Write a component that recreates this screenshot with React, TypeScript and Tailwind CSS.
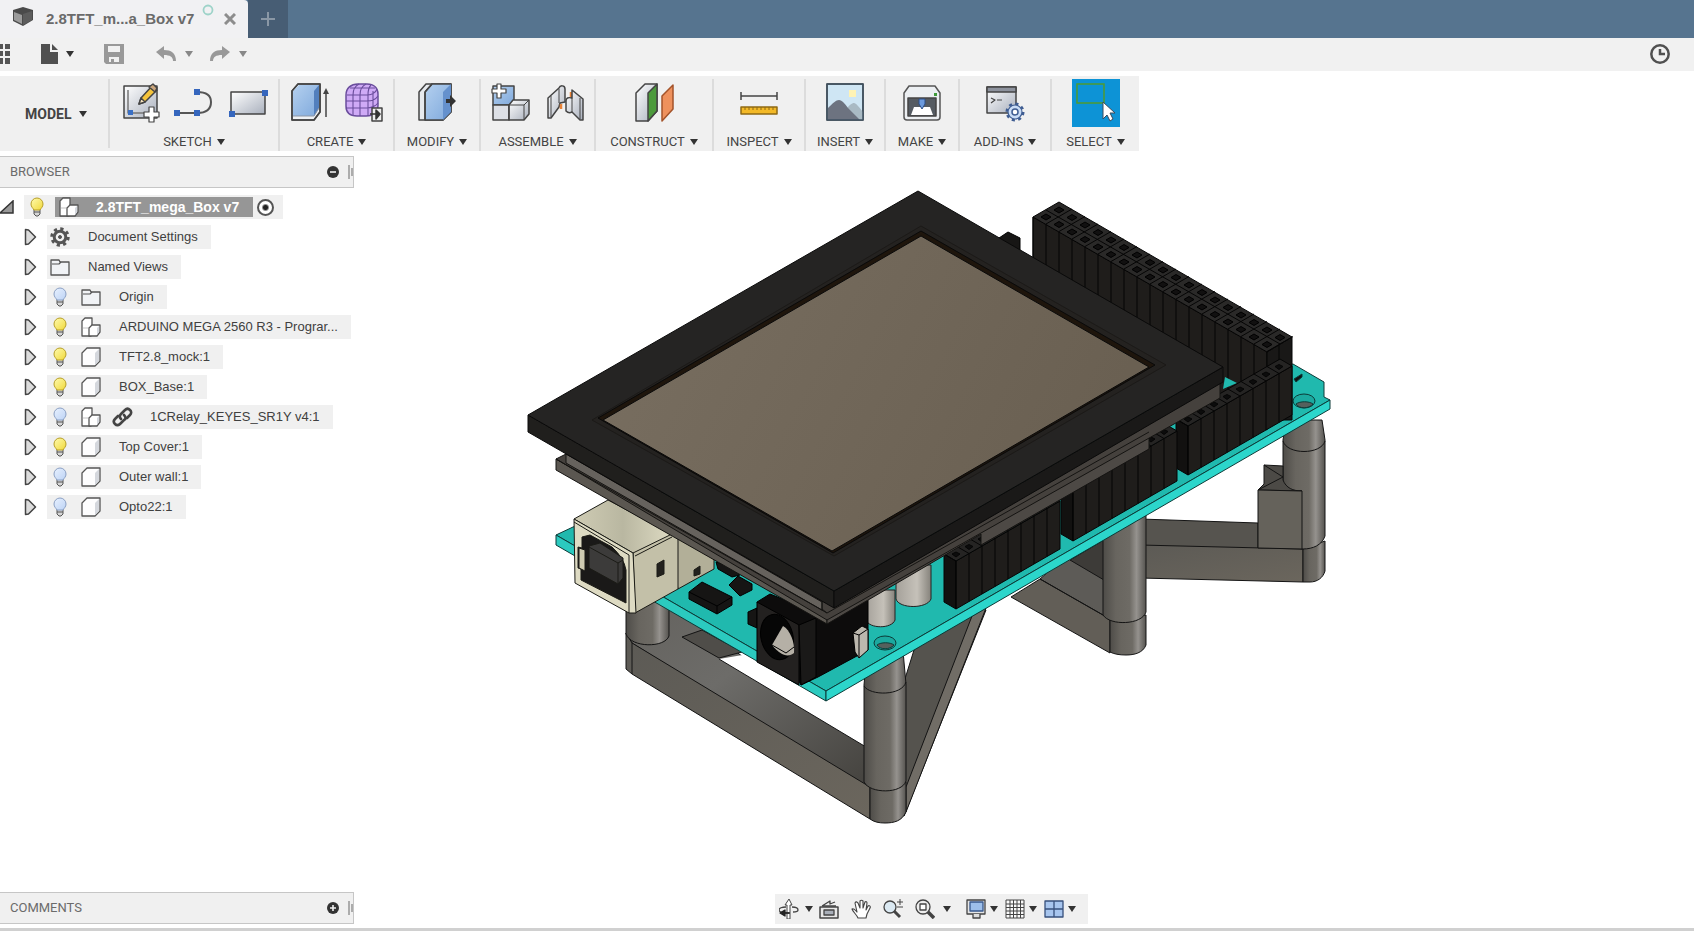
import type { ReactNode } from "react";

type TreeItem = {
  name: string;
  icon: "gear" | "folder" | "body" | "assembly";
  bulb?: "on" | "off";
  linked?: boolean;
};

const treeItems: TreeItem[] = [
  { name: "Document Settings", icon: "gear" },
  { name: "Named Views", icon: "folder" },
  { name: "Origin", icon: "folder", bulb: "off" },
  { name: "ARDUINO MEGA 2560 R3 - Prograr...", icon: "assembly", bulb: "on" },
  { name: "TFT2.8_mock:1", icon: "body", bulb: "on" },
  { name: "BOX_Base:1", icon: "body", bulb: "on" },
  { name: "1CRelay_KEYES_SR1Y v4:1", icon: "assembly", bulb: "off", linked: true },
  { name: "Top Cover:1", icon: "body", bulb: "on" },
  { name: "Outer wall:1", icon: "body", bulb: "off" },
  { name: "Opto22:1", icon: "body", bulb: "off" },
];

function Caret({ className = "text-[#333]" }: { className?: string }) {
  return (
    <svg width="8" height="6" viewBox="0 0 8 6" className={`shrink-0 ${className}`}>
      <path d="M0 0h8L4 6z" fill="currentColor" />
    </svg>
  );
}

function Gradients() {
  return (
    <svg width="0" height="0" className="absolute">
      <defs>
        <linearGradient id="silver" x1="0" y1="0" x2="1" y2="1">
          <stop offset="0" stopColor="#ffffff" />
          <stop offset="1" stopColor="#a9b0bd" />
        </linearGradient>
        <linearGradient id="blue" x1="0" y1="0" x2="1" y2="1">
          <stop offset="0" stopColor="#b4d0ef" />
          <stop offset="1" stopColor="#7fa9dc" />
        </linearGradient>
        <linearGradient id="bulbOn" x1="0" y1="0" x2="1" y2="1">
          <stop offset="0" stopColor="#fffbb0" />
          <stop offset="1" stopColor="#f0d83a" />
        </linearGradient>
        <linearGradient id="bulbOff" x1="0" y1="0" x2="1" y2="1">
          <stop offset="0" stopColor="#e8f1ff" />
          <stop offset="1" stopColor="#bdd3f5" />
        </linearGradient>
        <linearGradient id="post" x1="0" y1="0" x2="1" y2="0">
          <stop offset="0" stopColor="#4e4c48" />
          <stop offset="0.3" stopColor="#68655f" />
          <stop offset="0.62" stopColor="#6e6b65" />
          <stop offset="0.78" stopColor="#95928e" />
          <stop offset="1" stopColor="#55534f" />
        </linearGradient>
        <linearGradient id="screen" x1="0" y1="0" x2="1" y2="0.3">
          <stop offset="0" stopColor="#796f61" />
          <stop offset="1" stopColor="#6a6052" />
        </linearGradient>
        <linearGradient id="arm" x1="0" y1="0" x2="1" y2="1">
          <stop offset="0" stopColor="#5c5a55" />
          <stop offset="1" stopColor="#6b665d" />
        </linearGradient>
        <linearGradient id="armTop" x1="0" y1="0" x2="1" y2="1">
          <stop offset="0" stopColor="#64625e" />
          <stop offset="0.4" stopColor="#6d6c69" />
          <stop offset="1" stopColor="#44423e" />
        </linearGradient>
        <linearGradient id="cap" x1="0" y1="0" x2="1" y2="0">
          <stop offset="0" stopColor="#a5a19a" />
          <stop offset="0.6" stopColor="#c5c1b9" />
          <stop offset="1" stopColor="#85827b" />
        </linearGradient>
        <linearGradient id="usbTop" x1="0" y1="0" x2="1" y2="0">
          <stop offset="0" stopColor="#cfccb4" />
          <stop offset="0.5" stopColor="#b9b7a1" />
          <stop offset="1" stopColor="#dddac2" />
        </linearGradient>
      </defs>
    </svg>
  );
}

/* ---------- ribbon icons ---------- */

function RibbonIcon({ width = 40, children }: { width?: number; children: ReactNode }) {
  return (
    <svg width={width} height="40" viewBox={`0 0 ${width} 40`} fill="none" stroke="#444" strokeWidth="1.5" strokeLinejoin="round">
      {children}
    </svg>
  );
}

function SketchIcon() {
  return (
    <RibbonIcon>
      <path d="M4 3h33v32H4z" fill="url(#silver)" />
      <path d="M8 7v23h22" stroke="#777" />
      <path d="M8 27h5v5H8z" fill="#3a6fc4" stroke="none" />
      <path d="M19 21l2-6L32 3l5 4-12 12z" fill="#f5c43c" />
      <path d="M19 21l2-6 4 4z" fill="#f7e3bd" />
      <path d="M29 4l4-3 4 4-2 4z" fill="#c9a57c" />
      <path d="M29 24h5v5h5v5h-5v5h-5v-5h-5v-5h5z" fill="#fff" strokeWidth="1.2" />
    </RibbonIcon>
  );
}

function LineIcon() {
  return (
    <RibbonIcon>
      <path d="M3 30h20c9 0 14-4 14-11S31 9 23 9" strokeWidth="2" stroke="#555" />
      <g fill="#3566bd" stroke="none">
        <path d="M0 27h6v6H0zM20 27h6v6h-6zM20 6h6v6h-6z" />
      </g>
    </RibbonIcon>
  );
}

function RectIcon() {
  return (
    <RibbonIcon>
      <path d="M3 9h34v22H3z" fill="url(#silver)" />
      <path d="M34 7h6v6h-6zM1 28h6v6H1z" fill="#3566bd" stroke="none" />
    </RibbonIcon>
  );
}

function ExtrudeIcon() {
  return (
    <RibbonIcon>
      <path d="M2 8l6-7h22v28l-6 8H2z" fill="#eef1f5" />
      <path d="M3 8l6-6h20v23l-5 8H3z" fill="url(#blue)" stroke="none" />
      <path d="M24 8l5-6v23l-5 8z" fill="#527fbd" stroke="none" />
      <path d="M3 33h21l5-8" stroke="#8d97a6" strokeWidth="1" />
      <path d="M2 8l6-7h22v28l-6 8H2z" />
      <path d="M36 34V9" />
      <path d="M36 5l3 6h-6z" fill="#444" stroke="none" />
    </RibbonIcon>
  );
}

function FormIcon() {
  return (
    <RibbonIcon>
      <path d="M2 12c0-7 5-11 12-11h9c7 0 11 4 11 10v11c0 7-4 11-12 11h-9C6 33 2 30 2 23z" fill="#cfaaf6" stroke="#6a4d9c" />
      <path d="M3 12h21c4 0 8-3 9-6M2 18h21c5 0 9-2 11-5M2 25h21c4 0 9-2 11-5M9 32V12c0-6 2-9 6-11M16 33V12c0-6 2-9 6-11M24 33V12c0-5 1-8 3-10M29 30V8M6 5h25" stroke="#6a4d9c" strokeWidth="1.1" />
      <path d="M28 25h10v13H28z" fill="#eee" />
      <path d="M26 31h7M32 27l4 4-4 5z" fill="#333" stroke="#333" />
    </RibbonIcon>
  );
}

function PressPullIcon() {
  return (
    <RibbonIcon>
      <path d="M2 9l7-8h25v28l-8 8H2z" fill="#e7eaee" />
      <path d="M8 9l7-8h19v28l-8 8H8z" fill="url(#blue)" />
      <path d="M26 9l8-8v28l-8 8z" fill="#6591cd" stroke="none" />
      <path d="M8 9l7-8M8 9v28" />
      <path d="M29 16h4v-4l6 6-6 6v-4h-4z" fill="#333" stroke="none" />
    </RibbonIcon>
  );
}

function ComponentIcon() {
  return (
    <RibbonIcon>
      <path d="M2 3h21v19H2z" fill="url(#blue)" />
      <path d="M2 22h16v15H2z" fill="#dde0e6" />
      <path d="M18 22l4-5h16v14l-5 6H18z" fill="url(#silver)" />
      <path d="M18 22h15v15M33 22l5-5M18 22v15" strokeWidth="1" />
      <path d="M6 1h4v5h5v4h-5v5H6v-5H1V6h5z" fill="#fff" strokeWidth="1.2" />
    </RibbonIcon>
  );
}

function JointIcon() {
  return (
    <RibbonIcon>
      <path d="M3 15L14 5c1-3 6-3 6 1v13l-5 1-1 4-8 11H3z" fill="url(#silver)" />
      <path d="M6 13v21M14 6v14" strokeWidth="1" />
      <path d="M16 21v5M26 9v5" stroke="#e98338" strokeWidth="2.5" />
      <path d="M38 16L27 7v8c-4-1-6 0-6 3v10c2 2 4 2 6 1l8 8h3z" fill="url(#silver)" />
      <path d="M27 15v14M35 15v21" strokeWidth="1" />
    </RibbonIcon>
  );
}

function PlaneIcon() {
  return (
    <RibbonIcon>
      <path d="M2 10l9-9h12v27l-9 10H2z" fill="url(#silver)" />
      <path d="M14 10l9-9v27l-9 10z" fill="#4c9a3c" />
      <path d="M28 13l11-11v24L28 38z" fill="#ee915d" stroke="#a4532a" />
    </RibbonIcon>
  );
}

function MeasureIcon() {
  return (
    <RibbonIcon>
      <path d="M2 13h36M2 9v8M38 9v8" />
      <path d="M2 24h36v7H2z" fill="#f3b927" stroke="#8f6a14" />
      <path d="M6 24v3M10 24v3M14 24v3M18 24v3M22 24v3M26 24v3M30 24v3M34 24v3" stroke="#8f6a14" strokeWidth="1" />
    </RibbonIcon>
  );
}

function ImageIcon() {
  return (
    <RibbonIcon>
      <path d="M2 1h36v36H2z" fill="#cfe6f4" />
      <path d="M24 7h7v7h-7z" fill="#fff3b5" stroke="none" />
      <path d="M20 28c4-6 7-8 9-8s5 4 9 9v8H20z" fill="#a9bac4" stroke="none" />
      <path d="M3 25c5-5 8-8 11-8s6 4 9 8l12 12H3z" fill="#6d7380" stroke="none" />
      <path d="M2 1h36v36H2z" stroke="#3f5261" />
    </RibbonIcon>
  );
}

function PrintIcon() {
  return (
    <RibbonIcon>
      <path d="M2 10l5-7h26l5 7v24c0 2-1 3-3 3H5c-2 0-3-1-3-3z" fill="#eceff2" stroke="#555" />
      <path d="M6 15h28v18H6z" fill="#555b62" />
      <path d="M12 24h16l3 8H9z" fill="#fff" stroke="none" />
      <path d="M17 16h6v5l-3 5-3-5z" fill="#6c9add" stroke="#2d4f87" strokeWidth="1" />
      <path d="M32 10h3v3h-3z" fill="#3f9b3a" stroke="none" />
    </RibbonIcon>
  );
}

function ScriptIcon() {
  return (
    <RibbonIcon>
      <path d="M2 4h29v26H2z" fill="url(#silver)" />
      <path d="M2 4h29v5H2z" fill="#8d929d" />
      <path d="M6 15l4 2-4 3M12 17h5" strokeWidth="1.2" />
      <circle cx="30" cy="29" r="8" stroke="#3f5d92" strokeWidth="3" strokeDasharray="3 3.3" />
      <circle cx="30" cy="29" r="7" fill="#c9dcf6" stroke="#3f5d92" strokeWidth="1.2" />
      <circle cx="30" cy="29" r="3" fill="#fff" stroke="#3f5d92" />
    </RibbonIcon>
  );
}

function SelectIcon() {
  return (
    <svg width="48" height="48" viewBox="0 0 48 48" fill="none" className="bg-[#0d93d6]">
      <path d="M5 5h27v19H5z" stroke="#4f9b31" strokeWidth="1.5" />
      <path d="M31 23v17l4-4 3 6 3-2-3-6h5z" fill="#fff" stroke="#3b4a5c" strokeLinejoin="round" />
    </svg>
  );
}

const ribbonGroups = [
  { label: "SKETCH", width: "w-[170px]", icons: [SketchIcon, LineIcon, RectIcon] },
  { label: "CREATE", width: "w-[115px]", icons: [ExtrudeIcon, FormIcon] },
  { label: "MODIFY", width: "w-[86px]", icons: [PressPullIcon] },
  { label: "ASSEMBLE", width: "w-[115px]", icons: [ComponentIcon, JointIcon] },
  { label: "CONSTRUCT", width: "w-[118px]", icons: [PlaneIcon] },
  { label: "INSPECT", width: "w-[92px]", icons: [MeasureIcon] },
  { label: "INSERT", width: "w-[80px]", icons: [ImageIcon] },
  { label: "MAKE", width: "w-[74px]", icons: [PrintIcon] },
  { label: "ADD-INS", width: "w-[92px]", icons: [ScriptIcon] },
  { label: "SELECT", width: "w-[87px]", icons: [SelectIcon] },
];

/* ---------- tree icons ---------- */

function Bulb({ on }: { on: boolean }) {
  return (
    <svg width="14" height="20" viewBox="0 0 14 20" className="shrink-0">
      <path d="M4 12h6v5l-2 2H6l-2-2z" fill="#d6d6d6" stroke="#555" />
      <path d="M4 15h6" stroke="#555" />
      <path d="M7 1a6 6 0 0 0-6 6c0 3 2 4 3 6h6c1-2 3-3 3-6a6 6 0 0 0-6-6z" fill={on ? "url(#bulbOn)" : "url(#bulbOff)"} stroke={on ? "#b89f27" : "#8ba0c4"} />
    </svg>
  );
}

function NodeIcon({ icon }: { icon: TreeItem["icon"] }) {
  if (icon === "gear") {
    return (
      <svg width="20" height="20" viewBox="0 0 20 20" className="shrink-0" fill="none" stroke="#555">
        <circle cx="10" cy="10" r="5.8" strokeWidth="3" />
        <circle cx="10" cy="10" r="8.2" strokeWidth="3" strokeDasharray="3.2 3.24" />
        <circle cx="10" cy="10" r="1.5" fill="#555" />
      </svg>
    );
  }
  if (icon === "folder") {
    return (
      <svg width="20" height="20" viewBox="0 0 20 20" className="shrink-0" stroke="#555" strokeLinejoin="round">
        <path d="M1 3h8l1 2h9v13H1z" fill="#f1f3f6" strokeWidth="1.3" />
        <path d="M2 7h7l2-2" fill="none" strokeWidth="1.2" />
      </svg>
    );
  }
  if (icon === "body") {
    return (
      <svg width="20" height="20" viewBox="0 0 20 20" className="shrink-0" stroke="#555" strokeLinejoin="round">
        <path d="M1 6l5-5h13v13l-5 5H1z" fill="#fdfdfe" strokeWidth="1.3" />
        <path d="M14 6l4-4v12l-4 4z" fill="#d4d7dd" stroke="none" />
      </svg>
    );
  }
  return (
    <svg width="20" height="20" viewBox="0 0 20 20" className="shrink-0" stroke="#555" strokeLinejoin="round" strokeWidth="1.3">
      <path d="M1 4l3-3h7v7l-1 11H1z" fill="#fff" />
      <path d="M8 11l3-3h8v7l-3 4H8z" fill="#fff" />
      <path d="M16 11l2-2v6l-2 3z" fill="#d4d7dd" stroke="none" />
      <path d="M1 11h7" strokeWidth="0.6" stroke="#999" />
    </svg>
  );
}

function LinkIcon() {
  return (
    <svg width="22" height="20" viewBox="0 0 22 20" className="shrink-0" fill="none" stroke="#444" strokeWidth="2.6" strokeLinecap="round">
      <path d="M9 12c-2-2-1-4 0-5l4-4c2-2 4-1 5 0s2 3 0 5l-3 3" />
      <path d="M12 8c2 2 2 4 0 5l-4 4c-1 1-3 2-5 0s-1-4 0-5l3-3" />
    </svg>
  );
}

function ExpandArrow() {
  return (
    <button aria-label="Expand" className="mr-[10px] h-5 w-[13px] shrink-0">
      <svg width="13" height="18" viewBox="0 0 13 18">
        <path d="M1.5 1.5l3 .5 7 7-7 7-3 .5z" fill="#dcdcdc" stroke="#444" strokeWidth="1.5" strokeLinejoin="round" />
      </svg>
    </button>
  );
}

function TreeRow({ item }: { item: TreeItem }) {
  return (
    <li className="flex items-center pl-6">
      <ExpandArrow />
      <div className="flex h-6 items-center bg-[#f0f0f0] pr-[13px]">
        {item.bulb && (
          <button aria-label="Toggle visibility" className="ml-[6px] mr-[14px] w-[14px]">
            <Bulb on={item.bulb === "on"} />
          </button>
        )}
        <span className={item.bulb ? "mr-[18px]" : "ml-[3px] mr-[18px]"}>
          <NodeIcon icon={item.icon} />
        </span>
        {item.linked && (
          <span className="-ml-[7px] mr-4">
            <LinkIcon />
          </span>
        )}
        <span className="whitespace-nowrap text-[13px] text-[#404040]">{item.name}</span>
      </div>
    </li>
  );
}

function PanelHeader({ title, sign }: { title: string; sign: "minus" | "plus" }) {
  return (
    <div className="flex h-8 w-[354px] items-center border border-l-0 border-[#c6c6c6] bg-[#f0f0f0] pl-[10px] font-[Roboto,sans-serif]">
      <h2 className="flex-1 text-[13px] text-[#6b6b6b]">{title}</h2>
      <button aria-label={`Toggle ${title.toLowerCase()}`} className="mr-[9px]">
        <svg width="12" height="12" viewBox="0 0 12 12">
          <circle cx="6" cy="6" r="6" fill="#333" />
          <path d={sign === "minus" ? "M3 6h6" : "M3 6h6M6 3v6"} stroke="#f0f0f0" strokeWidth="1.6" />
        </svg>
      </button>
      <svg width="5" height="14" viewBox="0 0 5 14">
        <path d="M1 0v14M4 3v8" stroke="#888" strokeWidth="1.3" />
      </svg>
    </div>
  );
}

/* ---------- 3D model ---------- */

// a row of single pin sockets; x,y is the front-bottom corner, going up to the right
function SocketRow({ x, y, height, count }: { x: number; y: number; height: number; count: number }) {
  const dx = 13;
  const dy = -7.5;
  const w = count * dx;
  const h = count * dy;
  const cells = Array.from({ length: count }, (_, i) => i);
  return (
    <g stroke="#050505" strokeWidth="1">
      <path d={`M${x - 12} ${y - 7}v${-height}L${x} ${y - height}V${y}z`} fill="#121110" />
      <path d={`M${x} ${y}v${-height}l${w} ${h}v${height}z`} fill="#1f1d1b" />
      <path d={`M${x} ${y - height}l-12 -7l${w} ${h}l12 7z`} fill="#252423" />
      {cells.map((i) => (
        <g key={i}>
          <path d={`M${x + i * dx} ${y + i * dy}v${-height}l-12 -7`} fill="none" />
          <path d={`M${x + i * dx - 4} ${y - height + i * dy - 7}l4 -2 4 2 -4 3z`} fill="#0c0c0c" />
        </g>
      ))}
    </g>
  );
}

function DoubleHeader() {
  const cells = Array.from({ length: 18 }, (_, i) => i);
  return (
    <g stroke="#050505" strokeWidth="1">
      <path d="M1033 217L1267 352V430L1033 270z" fill="#1f1d1b" />
      <path d="M1267 352L1292 337V420H1267z" fill="#191817" />
      <path d="M1033 217L1059 202L1292 337L1267 352z" fill="#2a2928" />
      <path d="M1046 210L1280 344" fill="none" />
      {cells.map((i) => (
        <g key={i} transform={`translate(${i * 13} ${i * 7.5})`}>
          <path d="M1033 217v60M1046 224l26 -15" fill="none" />
          <path d="M1041 217l5 -3 5 3 -5 3zM1054 210l5 -3 5 3 -5 3z" fill="#111010" stroke="#000" />
        </g>
      ))}
      <path d="M1279 345V400" />
    </g>
  );
}

function Model() {
  return (
    <svg width="820" height="650" viewBox="520 180 820 650" className="shrink-0" strokeLinejoin="round" role="img" aria-label="2.8TFT_mega_Box model">
      <g stroke="#141414" strokeWidth="1">
        {/* right leg */}
        <path d="M1140 519L1258 523V549H1140z" fill="#56544f" />
        <path d="M1140 545L1303 549V582L1140 578z" fill="url(#arm)" />
        <path d="M1303 549l22-8v30c-2 7-8 11-15 11h-7z" fill="url(#post)" />
        <path d="M1286 420h36l3 20v96c-3 9-12 13-22 13l-20-3V440z" fill="url(#post)" />
        <path d="M1283 441c4 14 38 14 42 0" fill="none" />
        <path d="M1264 465l19 1v14c3 8 10 11 19 11l-44-1 6-6z" fill="#4c4a46" />
        <path d="M1264 465l19 12-25 13" fill="none" />
        <path d="M1258 490l44 1v58l-44-1z" fill="#65625b" />

        {/* middle leg */}
        <path d="M1040 579L1070 553L1104 540V617z" fill="#5d5b57" />
        <path d="M1070 560L1104 580V540z" fill="#3d3b38" />
        <path d="M1011 597L1040 579L1110 619V653z" fill="#625e57" />
        <path d="M1110 615h36v30c-3 8-12 10-20 10-7 0-12-1-16-3z" fill="url(#post)" />
        <path d="M1103 500h43v112c-4 13-36 14-43 3z" fill="url(#post)" />
        <path d="M1040 579L1103 615" />

        {/* front leg */}
        <path d="M904 682L914 650L975 610H986L904 816z" fill="#55534e" />
        <path d="M972 616L906 787V812L986 608z" fill="#716d66" />
        <path d="M626 633L668 605L720 640L866 747V790L632 643z" fill="url(#armTop)" />
        <path d="M682 637L702 630L742 652L719 658z" fill="#4f4d49" />
        <path d="M719 659L760 652L866 670V747z" fill="#fff" stroke="none" />
        <path d="M719 659L866 747" />
        <path d="M626 633L632 643L870 787V819L632 674L626 669z" fill="url(#arm)" />
        <path d="M632 643v31" />
        <path d="M626 600h43v36c-4 12-38 12-43-2z" fill="url(#post)" />
        <path d="M870 786l36-4v30c-4 9-12 11-21 11-6 0-11-1-15-4z" fill="url(#post)" />
        <path d="M868 640h34l4 44v97c-4 13-36 13-42 1v-97z" fill="url(#post)" />
        <path d="M864 686c6 10 38 10 42-4" fill="none" />
      </g>

      {/* circuit board */}
      <g stroke="#0c3b38" strokeWidth="1">
        <path d="M556 535L573 527L900 400L1293 364L1324 382V397L1330 400L826 691z" fill="#20b9ae" />
        <path d="M556 535L826 691V701L556 545z" fill="#2bcabf" />
        <path d="M826 691L1330 400V409L826 701z" fill="#2cd6cb" />
        <ellipse cx="885" cy="643" rx="11" ry="7" fill="#1ba99f" />
        <path d="M877 645c3 5 13 5 17 0-4-3-13-3-17 0z" fill="#55605d" />
        <ellipse cx="1304" cy="401" rx="11" ry="7" fill="#1ba99f" />
        <path d="M1296 404c3 5 13 5 17 0-4-3-13-3-17 0z" fill="#55605d" />
        <path d="M1294 379l8-5v3l-6 5z" fill="#111" />
      </g>

      <path d="M999 238L1008 232L1020 238V253H1005z" fill="#171615" stroke="#000" />
      <DoubleHeader />
      <path d="M1225 377l12 6-14 6z" fill="#20b9ae" />
      <SocketRow x={1188} y={475} height={49} count={8} />
      <SocketRow x={1073} y={541} height={50} count={8} />
      <SocketRow x={956} y={609} height={48} count={8} />

      {/* capacitors */}
      <g stroke="#222" strokeWidth="1">
        <path d="M896 565h35v34c-4 10-32 10-35 0z" fill="url(#cap)" />
        <path d="M866 590h29v30c-3 9-26 9-29 0z" fill="url(#cap)" />
      </g>

      {/* chips */}
      <g fill="#161514" stroke="#000">
        <path d="M689 592L702 582L732 597V605L717 614L689 599z" />
        <path d="M689 592L717 606V614M717 606L732 597" fill="none" />
        <path d="M729 585l9-9 14 8v6l-12 6z" />
        <path d="M716 562l10 3 14 10-8 2-14-8z" />
        <path d="M748 612l9-4v20l-9-4z" />
      </g>

      {/* usb port */}
      <g stroke="#1b1b16" strokeWidth="1">
        <path d="M668 534L714 555V569L678 589z" fill="#b2af98" />
        <path d="M633 552L678 530V589L635 613z" fill="#c3c0a8" />
        <path d="M574 519L608 500L672 534L633 553z" fill="url(#usbTop)" />
        <path d="M574 519L633 553L636 613L629 613L575 583z" fill="#dedbc3" />
        <path d="M574 522L629 555V613M635 556L672 537" fill="none" />
        <path d="M582 537L590 535L612 547Q624 558 626 570V603L581 580V569L578 568V547L582 548z" fill="#1a1918" />
        <path d="M579 548l6 2v21l-6-3z" fill="#cfcbb2" />
        <path d="M589 546L600 543L623 558V578L618 584L589 568z" fill="#3c3b3a" />
        <path d="M589 547L618 563V583M618 563L623 560" fill="none" />
        <path d="M657 564l7-4v14l-7 3z" fill="#23221e" />
        <path d="M694 570l6-4v8l-6 2z" fill="#23221e" />
      </g>

      {/* power jack */}
      <g stroke="#000" strokeWidth="1">
        <path d="M757 602L770 594L810 610L868 600V650L818 677L801 685z" fill="#0d0c0c" />
        <path d="M757 602L799 625V685L757 662z" fill="#232120" />
        <path d="M799 625L816 618V677L801 685z" fill="#1a1918" />
        <ellipse cx="777" cy="637" rx="16" ry="23" fill="#060606" transform="rotate(-14 777 637)" />
        <path d="M772 645L783 626C790 630 795 642 794 653C788 658 780 655 772 645z" fill="#b5b0a6" stroke="none" />
        <path d="M772 645l14 8 8-6" fill="none" />
        <path d="M853 633L862 626L868 629V650L859 658L855 652z" fill="#bcb8ae" />
        <path d="M853 633l6 2v22M859 635l9-6" fill="none" />
      </g>

      {/* display boards */}
      <g stroke="#151412" strokeWidth="1">
        <path d="M556 459L827 613V624L556 470z" fill="#5b5751" />
        <path d="M827 613L1149 427V449L981 545L981 534L827 624z" fill="#4d4945" />
        <path d="M556 459L566 454L836 600L1220 382V398L827 620z" fill="#45413d" />
        <path d="M566 454L822 602V610L566 463z" fill="#66625d" />
        <path d="M556 459L827 613L1149 432" fill="none" />
        <path d="M822 602v7l5 4" fill="none" />
      </g>

      {/* display frame and glass */}
      <g stroke="#0a0a0a" strokeWidth="1">
        <path d="M528 415L834 591V608L528 432z" fill="#201f1d" />
        <path d="M834 591L1223 367V382L834 608z" fill="#1a1918" />
        <path d="M528 415L918 191L1223 367L834 591z" fill="#252423" />
        <path d="M592 420L921 226L1166 365L834 556z" fill="#242220" stroke="#1c1a18" />
        <path d="M598 418L921 231L1155 365L833 553z" fill="#1e150c" />
        <path d="M603 420L921 236L1149 367L832 551z" fill="url(#screen)" />
      </g>
    </svg>
  );
}

/* ---------- bottom navigation ---------- */

function NavButton({ label, caret, className, children }: { label: string; caret?: boolean; className: string; children: ReactNode }) {
  return (
    <button aria-label={label} className={`flex items-center ${className}`}>
      <svg width="20" height="20" viewBox="0 0 20 20" fill="none" stroke="#444" strokeWidth="1.3" strokeLinejoin="round">
        {children}
      </svg>
      {caret && <Caret />}
    </button>
  );
}

function NavigationBar() {
  return (
    <nav className="ml-[421px] flex h-[30px] items-center self-end bg-[#f0f0f0] pl-1 pr-3">
      <NavButton label="Orbit" caret className="mr-[6px] gap-[6px]">
        <path d="M8 20V6H6l4-6 3 6h-2v14z" fill="#fff" strokeWidth="1" />
        <path d="M7 8c-4 0-7 1-7 3s5 3 10 3M13 8c4 0 6 1 6 3 0 1-2 2-5 2" />
        <path d="M1 14l5-3v6zM6 14h5" fill="#222" stroke="#222" />
      </NavButton>
      <NavButton label="Look at" className="mr-3">
        <path d="M1 8h18v11H1z" fill="#e8e8e8" strokeWidth="1.5" />
        <path d="M5 11h10v5H5z" fill="#a9afb9" />
        <path d="M3 7l8-5v3l5-2M3 7h14" />
      </NavButton>
      <NavButton label="Pan" className="mr-3">
        <path d="M7 19c-1-3-5-6-6-9 2-1 3 1 5 3L4 4c1-2 2-1 3 0l2 5V2c1-1 2-1 3 0v7l2-6c1-1 2 0 2 1l-1 7 2-4c1-1 3 0 2 2l-3 6-1 4z" fill="#fff" strokeWidth="1.1" />
      </NavButton>
      <NavButton label="Zoom" className="mr-3">
        <circle cx="7" cy="8" r="6" fill="#dbe9f2" />
        <path d="M11 12l6 6" strokeWidth="3" />
        <path d="M17 0v6M14 3h6M14 8h6" strokeWidth="1" />
      </NavButton>
      <NavButton label="Fit" caret className="mr-[15px] gap-2">
        <circle cx="8" cy="8" r="7" fill="#eee" />
        <path d="M5 5h6v6H5z" fill="#fff" />
        <path d="M13 13l6 6" strokeWidth="3.5" />
      </NavButton>
      <NavButton label="Display settings" caret className="mr-[7px] gap-1">
        <path d="M1 1h18v14H1z" fill="#e5e5e5" />
        <path d="M4 3h13v9H4z" fill="#9dbfea" stroke="#37588d" />
        <path d="M7 15v4h7v-4" fill="#ddd" />
      </NavButton>
      <NavButton label="Grid and snaps" caret className="mr-[7px] gap-1">
        <path d="M1 1h18v18H1zM5 1v18M8.500 1v18M12 1v18M15.500 1v18M1 5h18M1 8.500h18M1 12h18M1 15.500h18" fill="#fafafa" strokeWidth="1" />
      </NavButton>
      <NavButton label="Viewports" caret className="gap-1">
        <path d="M1 2h9v8H1zM10 2h9v8h-9zM1 10h9v8H1zM10 10h9v8h-9z" fill="#a7c5ee" stroke="#37507c" />
      </NavButton>
    </nav>
  );
}

/* ---------- top bars ---------- */

function TabBar() {
  return (
    <header className="flex h-[38px] shrink-0 bg-[#56748f]">
      <div className="relative flex w-[248px] items-center rounded-tr bg-[#f1f1f3] pl-3">
        <svg width="22" height="22" viewBox="0 0 22 22" className="-mt-1 mr-3">
          <path d="M1 4L11 1l10 3v10L11 20 1 15z" fill="#4a4a4a" />
          <path d="M2 6l8 3v9l-8-4z" fill="#9b9b9b" />
          <path d="M11 8l9-3v9l-9 5z" fill="#5c5c5c" />
        </svg>
        <span className="text-[15px] font-bold text-[#6a6a6a]">2.8TFT_m...a_Box v7</span>
        <svg width="12" height="12" viewBox="0 0 12 12" className="absolute left-[202px] top-1">
          <circle cx="6" cy="6" r="4.500" fill="none" stroke="#9ed3c9" strokeWidth="1.8" />
        </svg>
        <button aria-label="Close tab" className="ml-auto mr-3">
          <svg width="12" height="12" viewBox="0 0 12 12">
            <path d="M1 1l10 10M11 1L1 11" stroke="#8d8d8d" strokeWidth="3" />
          </svg>
        </button>
      </div>
      <button aria-label="New tab" className="flex w-10 items-center justify-center bg-[#475d74]">
        <svg width="14" height="14" viewBox="0 0 14 14">
          <path d="M7 0v14M0 7h14" stroke="#8a97a5" strokeWidth="2" />
        </svg>
      </button>
    </header>
  );
}

function QuickBar() {
  return (
    <div className="flex h-[33px] shrink-0 items-center bg-[#f1f1f1] pb-[2px]">
      <button aria-label="Data panel" className="mr-[30px]">
        <svg width="11" height="22" viewBox="0 0 11 22" fill="#555">
          <path d="M0 1h3v5H0zM5 1h5v5H5zM0 8h3v5H0zM5 8h5v5H5zM0 15h3v6H0zM5 15h5v6H5z" />
        </svg>
      </button>
      <button aria-label="File" className="mr-[30px] flex items-center gap-2">
        <svg width="17" height="20" viewBox="0 0 17 20" fill="#505050">
          <path d="M0 0h9v8h8v12H0z" />
          <path d="M11 0l6 6h-6z" />
        </svg>
        <Caret />
      </button>
      <button aria-label="Save" className="mr-8">
        <svg width="20" height="20" viewBox="0 0 20 20">
          <path d="M0 0h20v20H2l-2-2z" fill="#999" />
          <path d="M4 2h12v6H4zM5 13h10v5H5z" fill="#f1f1f1" />
          <path d="M7 15h3v3H7z" fill="#999" />
        </svg>
      </button>
      <button aria-label="Undo" className="mr-[17px] flex items-center gap-[9px]">
        <svg width="20" height="16" viewBox="0 0 20 16" fill="#999">
          <path d="M0 6l8-6v4c7 0 12 3 12 11h-3c0-4-3-6-9-6v4z" />
        </svg>
        <Caret className="text-[#888]" />
      </button>
      <button aria-label="Redo" className="flex items-center gap-[9px]">
        <svg width="20" height="16" viewBox="0 0 20 16" fill="#999">
          <path d="M20 6l-8-6v4C5 4 0 7 0 15h3c0-4 3-6 9-6v4z" />
        </svg>
        <Caret className="text-[#888]" />
      </button>
      <button aria-label="Job status" className="ml-auto mr-[23px]">
        <svg width="22" height="22" viewBox="0 0 22 22" fill="none" stroke="#505050" strokeWidth="2.500">
          <circle cx="11" cy="11" r="8.700" />
          <path d="M11 6v5h5" />
        </svg>
      </button>
    </div>
  );
}

function Ribbon() {
  return (
    <div className="mt-[5px] flex h-[75px] shrink-0 self-start bg-[#f0f0f0] font-[Roboto,sans-serif] text-[13px] text-[#444]">
      <button className="my-[3px] flex w-[110px] items-center gap-2 border-r-2 border-[#dcdcdc] pl-[25px] text-sm font-bold">
        MODEL <Caret />
      </button>
      {ribbonGroups.map((group) => (
        <div key={group.label} className={`mt-[3px] flex flex-col items-center justify-between border-r-2 border-[#dcdcdc] last:border-r-0 ${group.width}`}>
          <div className={group.label === "SELECT" ? "flex" : "mt-1 flex gap-[14px]"}>
            {group.icons.map((Icon, i) => (
              <button key={i} aria-label={`${group.label} tool ${i + 1}`}>
                <Icon />
              </button>
            ))}
          </div>
          <button className="flex h-[18px] items-center gap-[5px]">
            {group.label} <Caret />
          </button>
        </div>
      ))}
    </div>
  );
}

export default function App() {
  return (
    <div className="flex min-h-screen flex-col overflow-hidden bg-white font-['Liberation_Sans',Arial,sans-serif]">
      <Gradients />
      <TabBar />
      <QuickBar />
      <Ribbon />

      <main className="flex flex-1 pt-[5px]">
        <aside className="w-[354px] shrink-0">
          <PanelHeader title="BROWSER" sign="minus" />
          <ul className="mt-[7px] flex flex-col gap-[6px]">
            <li className="flex items-center">
              <button aria-label="Collapse" className="mr-[10px] w-[14px]">
                <svg width="14" height="14" viewBox="0 0 14 14">
                  <path d="M0 13L13 1v12z" fill="#999" stroke="#333" strokeWidth="1.500" />
                </svg>
              </button>
              <div className="flex h-6 items-center bg-[#f0f0f0] pl-[6px] pr-[9px]">
                <button aria-label="Toggle visibility" className="mr-[11px]">
                  <Bulb on />
                </button>
                <div className="mr-1 flex h-5 items-center bg-[#969696] pl-1 pr-[14px]">
                  <NodeIcon icon="assembly" />
                  <span className="ml-[17px] whitespace-nowrap text-sm font-bold text-white">2.8TFT_mega_Box v7</span>
                </div>
                <input type="radio" name="active" defaultChecked aria-label="Activate component" className="h-[17px] w-[17px] appearance-none rounded-full border-2 border-[#555] bg-[radial-gradient(circle,#222_2px,#fff_4px)]" />
              </div>
            </li>
            {treeItems.map((item) => (
              <TreeRow key={item.name} item={item} />
            ))}
          </ul>
        </aside>
        <section className="flex flex-1 pl-[166px] pt-6">
          <Model />
        </section>
      </main>

      <footer className="flex shrink-0 items-center border-b-[3px] border-[#d0d0d0] pb-1">
        <PanelHeader title="COMMENTS" sign="plus" />
        <NavigationBar />
      </footer>
    </div>
  );
}
